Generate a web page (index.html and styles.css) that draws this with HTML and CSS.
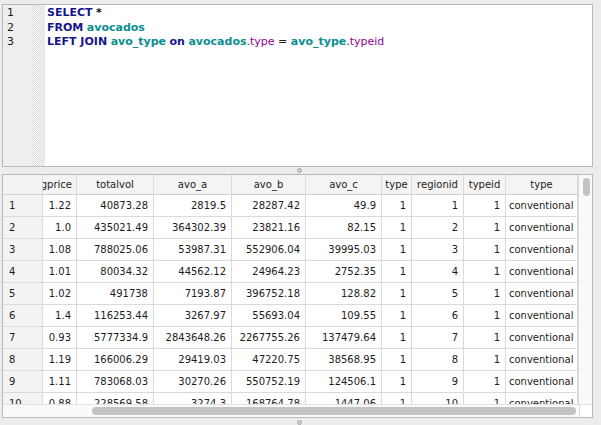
FILE: index.html
```html
<!DOCTYPE html>
<html>
<head>
<meta charset="utf-8">
<link rel="stylesheet" href="styles.css">
</head>
<body>
<div class="app">
  <div class="editor">
    <div class="gutter">
      <div>1</div>
      <div>2</div>
      <div>3</div>
    </div>
    <div class="fold"></div>
    <div class="code">
      <div class="line"><span class="kw">SELECT</span> <span class="op">*</span></div>
      <div class="line"><span class="kw">FROM</span> <span class="id">avocados</span></div>
      <div class="line"><span class="kw">LEFT JOIN</span> <span class="id">avo_type</span> <span class="kw">on</span> <span class="id">avocados</span><span class="pl">.</span><span class="col">type</span><span class="pl"> = </span><span class="id">avo_type</span><span class="pl">.</span><span class="col">typeid</span></div>
    </div>
  </div>
  <div class="splitter"><span class="knob"></span></div>
  <div class="results">
    <div class="grid-area">
      <div class="table">
        <div class="row head">
          <div class="c rn"></div>
          <div class="c clip"><span>avgprice</span></div>
          <div class="c">totalvol</div>
          <div class="c">avo_a</div>
          <div class="c">avo_b</div>
          <div class="c">avo_c</div>
          <div class="c">type</div>
          <div class="c">regionid</div>
          <div class="c">typeid</div>
          <div class="c">type</div>
        </div>
        <div class="row"><div class="c rn">1</div><div class="c">1.22</div><div class="c">40873.28</div><div class="c">2819.5</div><div class="c">28287.42</div><div class="c">49.9</div><div class="c">1</div><div class="c">1</div><div class="c">1</div><div class="c t">conventional</div></div>
        <div class="row"><div class="c rn">2</div><div class="c">1.0</div><div class="c">435021.49</div><div class="c">364302.39</div><div class="c">23821.16</div><div class="c">82.15</div><div class="c">1</div><div class="c">2</div><div class="c">1</div><div class="c t">conventional</div></div>
        <div class="row"><div class="c rn">3</div><div class="c">1.08</div><div class="c">788025.06</div><div class="c">53987.31</div><div class="c">552906.04</div><div class="c">39995.03</div><div class="c">1</div><div class="c">3</div><div class="c">1</div><div class="c t">conventional</div></div>
        <div class="row"><div class="c rn">4</div><div class="c">1.01</div><div class="c">80034.32</div><div class="c">44562.12</div><div class="c">24964.23</div><div class="c">2752.35</div><div class="c">1</div><div class="c">4</div><div class="c">1</div><div class="c t">conventional</div></div>
        <div class="row"><div class="c rn">5</div><div class="c">1.02</div><div class="c">491738</div><div class="c">7193.87</div><div class="c">396752.18</div><div class="c">128.82</div><div class="c">1</div><div class="c">5</div><div class="c">1</div><div class="c t">conventional</div></div>
        <div class="row"><div class="c rn">6</div><div class="c">1.4</div><div class="c">116253.44</div><div class="c">3267.97</div><div class="c">55693.04</div><div class="c">109.55</div><div class="c">1</div><div class="c">6</div><div class="c">1</div><div class="c t">conventional</div></div>
        <div class="row"><div class="c rn">7</div><div class="c">0.93</div><div class="c">5777334.9</div><div class="c">2843648.26</div><div class="c">2267755.26</div><div class="c">137479.64</div><div class="c">1</div><div class="c">7</div><div class="c">1</div><div class="c t">conventional</div></div>
        <div class="row"><div class="c rn">8</div><div class="c">1.19</div><div class="c">166006.29</div><div class="c">29419.03</div><div class="c">47220.75</div><div class="c">38568.95</div><div class="c">1</div><div class="c">8</div><div class="c">1</div><div class="c t">conventional</div></div>
        <div class="row"><div class="c rn">9</div><div class="c">1.11</div><div class="c">783068.03</div><div class="c">30270.26</div><div class="c">550752.19</div><div class="c">124506.1</div><div class="c">1</div><div class="c">9</div><div class="c">1</div><div class="c t">conventional</div></div>
        <div class="row"><div class="c rn">10</div><div class="c">0.88</div><div class="c">228569.58</div><div class="c">3274.3</div><div class="c">168764.78</div><div class="c">1447.06</div><div class="c">1</div><div class="c">10</div><div class="c">1</div><div class="c t">conventional</div></div>
      </div>
      <div class="vscroll"><div class="vthumb"></div></div>
    </div>
    <div class="hbar">
      <div class="htrack"><div class="hthumb"></div></div>
      <div class="corner"></div>
    </div>
  </div>
  <div class="splitter bottom"><span class="knob"></span></div>
</div>
</body>
</html>
```

FILE: styles.css
```css
html, body {
  margin: 0;
  padding: 0;
  background: #ececec;
  width: 601px;
  height: 425px;
  overflow: hidden;
}

.app {
  display: flex;
  flex-direction: column;
  padding: 4px 8px 0 2px;
  font-family: "DejaVu Sans", Verdana, sans-serif;
}

.editor {
  height: 163px;
  box-sizing: border-box;
  border: 1px solid #b9b9b9;
  background: #ffffff;
  display: flex;
}

.gutter {
  width: 29px;
  background: #eeeeee;
  font-size: 11px;
  line-height: 14.5px;
  color: #1a1a1a;
  padding: 1px 0 0 4px;
  box-sizing: border-box;
}

.fold {
  width: 13px;
  background-color: #f7f7f7;
  background-image: repeating-conic-gradient(#dcdcdc 0 25%, #f7f7f7 0 50%);
  background-size: 2px 2px;
}

.code {
  padding: 1px 0 0 2px;
  font-size: 11px;
  line-height: 14.5px;
  color: #111;
}

.line {
  white-space: nowrap;
}

.kw { color: #16168c; font-weight: bold; }
.id { color: #0a8f8f; font-weight: bold; }
.op { color: #111; font-weight: bold; }
.col { color: #940094; }
.pl { color: #222; }

.splitter {
  height: 7px;
  display: flex;
  justify-content: center;
  align-items: center;
}

.knob {
  width: 5px;
  height: 5px;
  border-radius: 50%;
  background: #cfcfcf;
  border: 1px solid #a9a9a9;
  box-sizing: border-box;
  margin-left: 4px;
}

.splitter.bottom {
  align-items: flex-end;
  height: 7px;
}

.results {
  height: 244px;
  box-sizing: border-box;
  border: 1px solid #b9b9b9;
  background: #ffffff;
  display: flex;
  flex-direction: column;
}

.grid-area {
  height: 229px;
  display: flex;
  overflow: hidden;
}

.table {
  width: 575px;
  font-size: 10px;
  color: #1c1c1c;
}

.row {
  display: grid;
  grid-template-columns: 40px 34px 77px 78px 74px 76px 30px 52px 42px 72px;
  height: 22px;
}

.row.head {
  height: 20px;
  background: #f4f4f4;
}

.c {
  box-sizing: border-box;
  border-right: 1px solid #dadada;
  border-bottom: 1px solid #dadada;
  display: flex;
  align-items: center;
  justify-content: flex-end;
  padding: 0 5px 0 3px;
  white-space: nowrap;
  overflow: hidden;
}

.head .c {
  justify-content: center;
  border-bottom-color: #d0d0d0;
  padding: 0 2px;
}

.head .c.clip {
  justify-content: flex-end;
  padding-right: 4px;
}

.c.rn {
  justify-content: flex-start;
  padding-left: 6px;
  background: #f3f3f3;
}

.c.t {
  justify-content: flex-start;
  padding-left: 3px;
}

.vscroll {
  width: 14px;
  border-left: 1px solid #dadada;
  box-sizing: border-box;
  background: #fafafa;
  padding: 3px 0 0 4px;
}

.vthumb {
  width: 7px;
  height: 18px;
  border-radius: 4px;
  background: #c3c3c3;
}

.hbar {
  height: 13px;
  display: flex;
  border-top: 1px solid #e2e2e2;
  box-sizing: border-box;
}

.htrack {
  width: 576px;
  background: #fafafa;
  padding: 2px 0 0 89px;
  box-sizing: border-box;
}

.hthumb {
  width: 484px;
  height: 8px;
  border-radius: 4px;
  background: #c3c3c3;
}

.corner {
  flex: 1;
  border-left: 1px solid #dadada;
  background: #ffffff;
}
```
